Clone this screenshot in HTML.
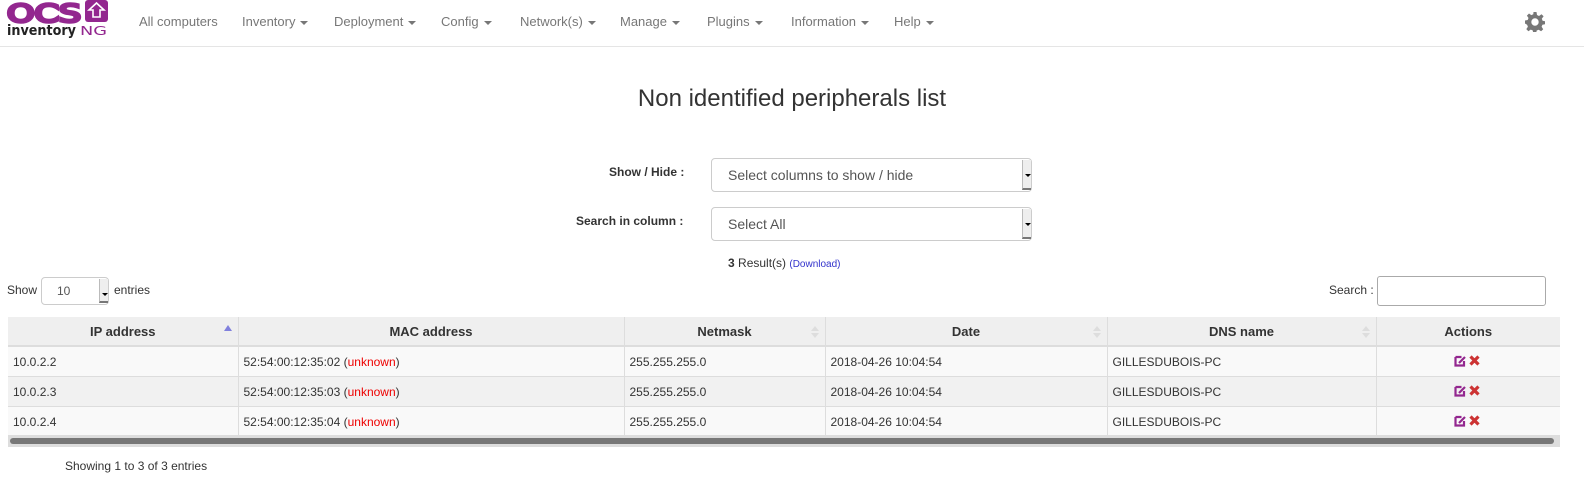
<!DOCTYPE html>
<html><head><meta charset="utf-8"><style>
*{box-sizing:border-box;margin:0;padding:0}
html,body{overflow:hidden}
body{width:1584px;height:484px;background:#fff;font-family:"Liberation Sans",Arial,sans-serif;color:#333;position:relative;font-size:12px}
.a{position:absolute;white-space:nowrap}
.nav{left:0;top:0;width:1584px;height:47px;background:#fff;border-bottom:1px solid #e5e5e5}
.ni{top:14px;font-size:13px;color:#777}
.car{display:inline-block;width:0;height:0;border-left:4px solid transparent;border-right:4px solid transparent;border-top:4px solid #777;vertical-align:middle;margin-left:5px}
.sel{border:1px solid #ccc;border-radius:4px;height:34px;font-size:14px;color:#555;padding:8px 16px;background:#fff}
.sel .ar{position:absolute;right:0;top:1px;width:9px;height:30px;background:#eee;border-left:1px solid #bbb;border-bottom:2px solid #777}
.sel .ar:after{content:"";position:absolute;left:2px;top:14px;border-left:3px solid transparent;border-right:3px solid transparent;border-top:3px solid #000}
table{position:absolute;left:8px;top:317px;border-collapse:collapse;width:1552px;font-size:12px}
th{background:#efefef;height:29px;font-weight:bold;font-size:13px;border-right:1px solid #ddd;border-bottom:2px solid #ddd;position:relative}
td{height:30px;padding:2px 5px 0;border-right:1px solid #ddd;border-top:1px solid #ddd}
tr.o td{background:#f9f9f9}tr.e td{background:#f1f1f1}
.u{color:#e00}
.sort:after{content:"";position:absolute;right:6px;top:9px;border-left:4px solid transparent;border-right:4px solid transparent;border-bottom:5px solid #ddd}
.sort:before{content:"";position:absolute;right:6px;top:16px;border-left:4px solid transparent;border-right:4px solid transparent;border-top:5px solid #ddd}
</style></head><body>
<div class="a nav"></div>
<svg class="a" style="left:5px;top:0" width="106" height="40" viewBox="0 0 106 40">
<text x="2" y="22" font-family="DejaVu Sans" font-size="25" fill="none" stroke="#93278f" stroke-width="3" textLength="74" lengthAdjust="spacingAndGlyphs">OCS</text>
<rect x="80" y="0" width="23" height="22" rx="3" fill="#93278f"/><path d="M91.5 3 L99 10 H95 V17 H88 V10 H84 Z" fill="none" stroke="#fff" stroke-width="1.6"/>
<text x="2" y="35" font-family="DejaVu Sans" font-weight="bold" font-size="14" fill="#222" textLength="69" lengthAdjust="spacingAndGlyphs">inventory</text>
<text x="75" y="35" font-family="DejaVu Sans" font-size="12" fill="#93278f" textLength="27" lengthAdjust="spacingAndGlyphs">NG</text>
</svg>
<div class="a ni" style="left:139px">All computers</div>
<div class="a ni" style="left:242px">Inventory<span class="car"></span></div>
<div class="a ni" style="left:334px">Deployment<span class="car"></span></div>
<div class="a ni" style="left:441px">Config<span class="car"></span></div>
<div class="a ni" style="left:520px">Network(s)<span class="car"></span></div>
<div class="a ni" style="left:620px">Manage<span class="car"></span></div>
<div class="a ni" style="left:707px">Plugins<span class="car"></span></div>
<div class="a ni" style="left:791px">Information<span class="car"></span></div>
<div class="a ni" style="left:894px">Help<span class="car"></span></div>
<svg class="a" style="left:1525px;top:12px" width="20" height="20" viewBox="0 0 20 20"><path fill="#777" fill-rule="evenodd" d="M8.5 0h3l.5 3 2 1 2.5-1.8 2.1 2.1L16.8 6.8l.8 2 2.4.5v3l-2.6.5-.8 2 1.6 2.4-2.1 2.1-2.4-1.6-2 .8-.5 2.5h-3l-.5-2.6-2-.8-2.3 1.6-2.1-2.1 1.6-2.3-.8-2L0 11.5v-3l2.7-.5.8-2L1.9 3.6 4 1.5 6.3 3.1l2-.8zM10 6.3a3.7 3.7 0 1 0 0 7.4 3.7 3.7 0 0 0 0-7.4z"/></svg>
<div class="a" style="left:0;width:1584px;top:85px;text-align:center;font-size:24px;color:#333">Non identified peripherals list</div>
<div class="a" style="left:609px;top:165px;font-weight:bold;font-size:12px">Show / Hide :</div>
<div class="a" style="left:576px;top:214px;font-weight:bold;font-size:12px">Search in column :</div>
<div class="a sel" style="left:711px;top:158px;width:321px">Select columns to show / hide<div class="ar"></div></div>
<div class="a sel" style="left:711px;top:207px;width:321px">Select All<div class="ar"></div></div>
<div class="a" style="left:728px;top:256px;font-size:12px"><b>3</b> Result(s) <span style="color:#33c;font-size:10px">(Download)</span></div>
<div class="a" style="left:7px;top:283px;font-size:12px">Show</div>
<div class="a sel" style="left:41px;top:277px;width:68px;height:28px;font-size:12px;padding:6px 15px">10<div class="ar" style="height:24px"></div></div>
<div class="a" style="left:114px;top:283px;font-size:12px">entries</div>
<div class="a" style="left:1329px;top:283px;font-size:12px">Search :</div>
<div class="a" style="left:1377px;top:276px;width:169px;height:30px;border:1px solid #aaa;border-radius:3px"></div>
<table>
<tr><th style="width:230px">IP address<span class="a" style="right:6px;top:8px;border-left:4px solid transparent;border-right:4px solid transparent;border-bottom:6px solid #8080dd"></span></th><th style="width:386px">MAC address</th><th class="sort" style="width:201px">Netmask</th><th class="sort" style="width:282px">Date</th><th class="sort" style="width:269px">DNS name</th><th style="border-right:none">Actions</th></tr>
<tr class="o"><td>10.0.2.2</td><td>52:54:00:12:35:02 (<span class="u">unknown</span>)</td><td>255.255.255.0</td><td>2018-04-26 10:04:54</td><td>GILLESDUBOIS-PC</td><td style="text-align:center;border-right:none"><svg width="28" height="13" viewBox="0 0 28 13"><path d="M1.5 3h6M1.5 3v8.5h8.5V7" fill="none" stroke="#93278f" stroke-width="2.2"/><path d="M5 9l6-6" stroke="#93278f" stroke-width="2.2"/><path d="M16.5 2.5l8 8M24.5 2.5l-8 8" stroke="#c33" stroke-width="3.2"/></svg></td></tr>
<tr class="e"><td>10.0.2.3</td><td>52:54:00:12:35:03 (<span class="u">unknown</span>)</td><td>255.255.255.0</td><td>2018-04-26 10:04:54</td><td>GILLESDUBOIS-PC</td><td style="text-align:center;border-right:none"><svg width="28" height="13" viewBox="0 0 28 13"><path d="M1.5 3h6M1.5 3v8.5h8.5V7" fill="none" stroke="#93278f" stroke-width="2.2"/><path d="M5 9l6-6" stroke="#93278f" stroke-width="2.2"/><path d="M16.5 2.5l8 8M24.5 2.5l-8 8" stroke="#c33" stroke-width="3.2"/></svg></td></tr>
<tr class="o"><td style="height:28px">10.0.2.4</td><td>52:54:00:12:35:04 (<span class="u">unknown</span>)</td><td>255.255.255.0</td><td>2018-04-26 10:04:54</td><td>GILLESDUBOIS-PC</td><td style="text-align:center;border-right:none"><svg width="28" height="13" viewBox="0 0 28 13"><path d="M1.5 3h6M1.5 3v8.5h8.5V7" fill="none" stroke="#93278f" stroke-width="2.2"/><path d="M5 9l6-6" stroke="#93278f" stroke-width="2.2"/><path d="M16.5 2.5l8 8M24.5 2.5l-8 8" stroke="#c33" stroke-width="3.2"/></svg></td></tr>
</table>
<div class="a" style="left:8px;top:435px;width:1552px;height:12px;background:#ddd"><div style="margin:3px 6px 0 2px;height:6px;border-radius:3px;background:#777"></div></div>
<div class="a" style="left:65px;top:459px;font-size:12px">Showing 1 to 3 of 3 entries</div>
</body></html>
